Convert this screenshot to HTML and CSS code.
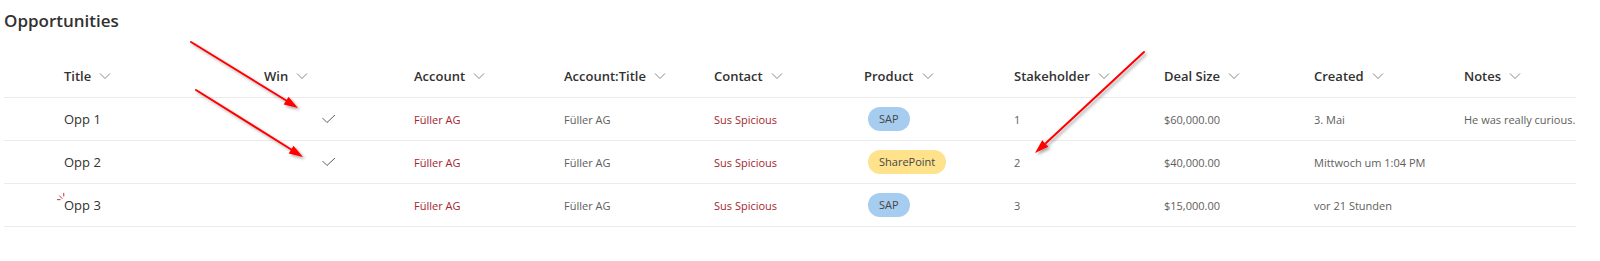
FILE: index.html
```html
<!DOCTYPE html>
<html lang="de">
<head>
<meta charset="utf-8">
<title>Opportunities</title>
<link rel="stylesheet" href="styles.css">
</head>
<body>
<div class="page">
  <h1 class="list-title">Opportunities</h1>
  <div class="list">
    <div class="row head">
      <div class="cell chk"></div>
      <div class="cell hd">Title<svg class="chev" viewBox="0 0 12 12"><path d="M1 3.5 L6 8.5 L11 3.5"/></svg></div>
      <div class="cell hd">Win<svg class="chev" viewBox="0 0 12 12"><path d="M1 3.5 L6 8.5 L11 3.5"/></svg></div>
      <div class="cell hd">Account<svg class="chev" viewBox="0 0 12 12"><path d="M1 3.5 L6 8.5 L11 3.5"/></svg></div>
      <div class="cell hd">Account:Title<svg class="chev" viewBox="0 0 12 12"><path d="M1 3.5 L6 8.5 L11 3.5"/></svg></div>
      <div class="cell hd">Contact<svg class="chev" viewBox="0 0 12 12"><path d="M1 3.5 L6 8.5 L11 3.5"/></svg></div>
      <div class="cell hd">Product<svg class="chev" viewBox="0 0 12 12"><path d="M1 3.5 L6 8.5 L11 3.5"/></svg></div>
      <div class="cell hd">Stakeholder<svg class="chev" viewBox="0 0 12 12"><path d="M1 3.5 L6 8.5 L11 3.5"/></svg></div>
      <div class="cell hd">Deal Size<svg class="chev" viewBox="0 0 12 12"><path d="M1 3.5 L6 8.5 L11 3.5"/></svg></div>
      <div class="cell hd">Created<svg class="chev" viewBox="0 0 12 12"><path d="M1 3.5 L6 8.5 L11 3.5"/></svg></div>
      <div class="cell hd">Notes<svg class="chev" viewBox="0 0 12 12"><path d="M1 3.5 L6 8.5 L11 3.5"/></svg></div>
    </div>

    <div class="row">
      <div class="cell chk"></div>
      <div class="cell title">Opp 1</div>
      <div class="cell win"><svg class="check" viewBox="0 0 14 10"><path d="M0.5 4 L5 8.5 L13 1"/></svg></div>
      <div class="cell link">Füller AG</div>
      <div class="cell">Füller AG</div>
      <div class="cell link">Sus Spicious</div>
      <div class="cell"><span class="pill blue">SAP</span></div>
      <div class="cell">1</div>
      <div class="cell">$60,000.00</div>
      <div class="cell">3. Mai</div>
      <div class="cell">He was really curious.</div>
    </div>

    <div class="row">
      <div class="cell chk"></div>
      <div class="cell title">Opp 2</div>
      <div class="cell win"><svg class="check" viewBox="0 0 14 10"><path d="M0.5 4 L5 8.5 L13 1"/></svg></div>
      <div class="cell link">Füller AG</div>
      <div class="cell">Füller AG</div>
      <div class="cell link">Sus Spicious</div>
      <div class="cell"><span class="pill yellow">SharePoint</span></div>
      <div class="cell">2</div>
      <div class="cell">$40,000.00</div>
      <div class="cell">Mittwoch um 1:04 PM</div>
      <div class="cell"></div>
    </div>

    <div class="row">
      <div class="cell chk"></div>
      <div class="cell title"><svg class="glimmer" viewBox="0 0 10 10"><path d="M0 8.5 H4 M2.5 4 L6 7.5 M7.5 1 V5"/></svg>Opp 3</div>
      <div class="cell win"></div>
      <div class="cell link">Füller AG</div>
      <div class="cell">Füller AG</div>
      <div class="cell link">Sus Spicious</div>
      <div class="cell"><span class="pill blue">SAP</span></div>
      <div class="cell">3</div>
      <div class="cell">$15,000.00</div>
      <div class="cell">vor 21 Stunden</div>
      <div class="cell"></div>
    </div>
  </div>

  <svg class="arrows" viewBox="0 0 1600 261" width="1600" height="261">
    <defs>
      <filter id="sh" x="-20%" y="-20%" width="140%" height="140%">
        <feDropShadow dx="2" dy="2" stdDeviation="1.5" flood-color="#000" flood-opacity="0.35"/>
      </filter>
    </defs>
    <g filter="url(#sh)" fill="#ff0000" stroke="#ff0000" stroke-width="2" stroke-linecap="round">
      <line x1="191" y1="42" x2="287" y2="101"/>
      <polygon stroke="none" points="298,108 283.7,104.5 288.5,96.8"/>
      <line x1="196" y1="90" x2="292" y2="150"/>
      <polygon stroke="none" points="303,157 288.7,153.4 293.5,145.8"/>
      <line x1="1144" y1="52" x2="1046" y2="143"/>
      <polygon stroke="none" points="1035,153 1042.2,140.2 1048.4,146.8"/>
    </g>
  </svg>
</div>
</body>
</html>
```

FILE: styles.css
```css
html, body {
  margin: 0;
  padding: 0;
  background: #ffffff;
}

.page {
  position: relative;
  width: 1600px;
  height: 261px;
  overflow: hidden;
  font-family: "Open Sans", "Noto Sans", sans-serif;
  color: #605e5c;
}

.list-title {
  margin: 0;
  padding: 9px 0 0 4px;
  height: 47px;
  font-size: 17px;
  line-height: 24px;
  font-weight: 600;
  color: #323130;
}

.list {
  margin-left: 4px;
  width: 1572px;
}

.row {
  display: grid;
  grid-template-columns: 48px 200px repeat(8, 150px) 124px;
  height: 42px;
  border-bottom: 1px solid #edebe9;
  align-items: center;
  font-size: 11px;
}

.row.head {
  box-sizing: border-box;
  height: 42px;
  padding-top: 11px;
  align-items: start;
}

.cell {
  position: relative;
  padding-left: 12px;
  white-space: nowrap;
  display: flex;
  align-items: center;
}

.cell.chk {
  padding-left: 0;
}

.hd {
  font-size: 13px;
  font-weight: 600;
  color: #323130;
}

.chev {
  width: 12px;
  height: 12px;
  margin-left: 8px;
  fill: none;
  stroke: #8a8886;
  stroke-width: 1;
}

.title {
  font-size: 13px;
  color: #323130;
}

.link {
  color: #a4262c;
}

.win {
  padding-left: 70px;
}

.check {
  width: 14px;
  height: 10px;
  fill: none;
  stroke: #605e5c;
  stroke-width: 1;
}

.glimmer {
  position: absolute;
  left: 5px;
  top: -4px;
  width: 9px;
  height: 9px;
  fill: none;
  stroke: #a4262c;
  stroke-width: 1;
}

.pill {
  display: inline-block;
  margin-left: 4px;
  height: 24px;
  line-height: 24px;
  padding: 0 11px;
  border-radius: 12px;
  color: #484644;
}

.pill.blue {
  background: #a6cdef;
}

.pill.yellow {
  background: #fee28c;
}

.arrows {
  position: absolute;
  left: 0;
  top: 0;
  pointer-events: none;
}
```
